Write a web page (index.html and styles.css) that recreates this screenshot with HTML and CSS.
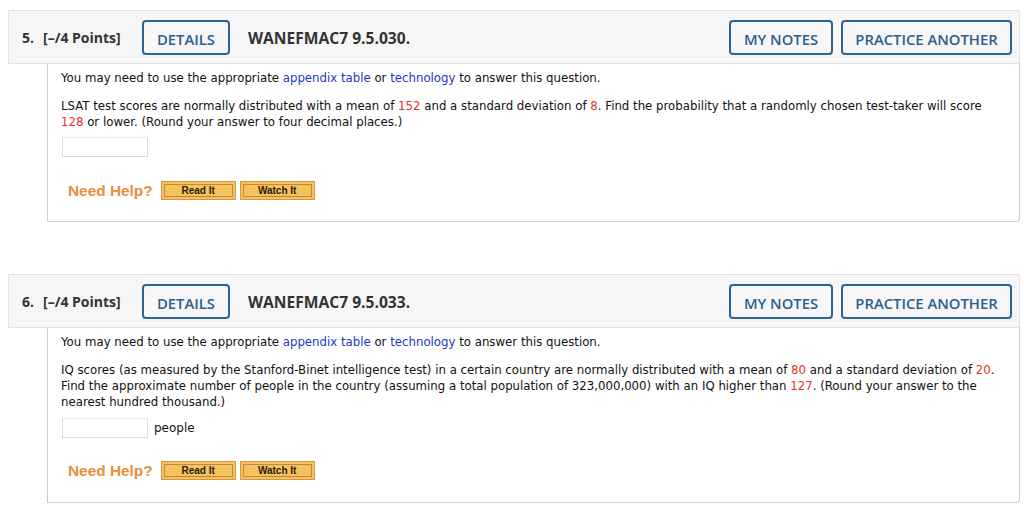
FILE: index.html
```html
<!DOCTYPE html>
<html>
<head>
<meta charset="utf-8">
<link rel="stylesheet" href="styles.css">
</head>
<body>
<div class="page">
  <section class="question">
    <div class="qhead">
      <div class="qnum">5.</div>
      <div class="qpts">[–/4 Points]</div>
      <button class="obtn details">DETAILS</button>
      <div class="qcode">WANEFMAC7 9.5.030.</div>
      <div class="spacer"></div>
      <button class="obtn notes">MY NOTES</button>
      <button class="obtn practice">PRACTICE ANOTHER</button>
    </div>
    <div class="qbody">
      <p class="intro">You may need to use the appropriate <a class="lnk">appendix table</a> or <a class="lnk">technology</a> to answer this question.</p>
      <p class="prob">LSAT test scores are normally distributed with a mean of <span class="num">152</span> and a standard deviation of <span class="num">8</span>. Find the probability that a randomly chosen test-taker will score <span class="num">128</span> or lower. (Round your answer to four decimal places.)</p>
      <div class="answer"><span class="inbox"></span></div>
      <div class="help">
        <span class="needhelp">Need Help?</span>
        <span class="hbtn">Read It</span>
        <span class="hbtn">Watch It</span>
      </div>
    </div>
  </section>

  <section class="question second">
    <div class="qhead">
      <div class="qnum">6.</div>
      <div class="qpts">[–/4 Points]</div>
      <button class="obtn details">DETAILS</button>
      <div class="qcode">WANEFMAC7 9.5.033.</div>
      <div class="spacer"></div>
      <button class="obtn notes">MY NOTES</button>
      <button class="obtn practice">PRACTICE ANOTHER</button>
    </div>
    <div class="qbody b2">
      <p class="intro">You may need to use the appropriate <a class="lnk">appendix table</a> or <a class="lnk">technology</a> to answer this question.</p>
      <p class="prob">IQ scores (as measured by the Stanford-Binet intelligence test) in a certain country are normally distributed with a mean of <span class="num">80</span> and a standard deviation of <span class="num">20</span>. Find the approximate number of people in the country (assuming a total population of 323,000,000) with an IQ higher than <span class="num">127</span>. (Round your answer to the nearest hundred thousand.)</p>
      <div class="answer a2"><span class="inbox"></span><span class="unit">people</span></div>
      <div class="help">
        <span class="needhelp">Need Help?</span>
        <span class="hbtn">Read It</span>
        <span class="hbtn">Watch It</span>
      </div>
    </div>
  </section>
</div>
</body>
</html>
```

FILE: styles.css
```css
html, body {
  margin: 0;
  padding: 0;
  background: #ffffff;
}
.page {
  padding: 10px 4px 0 8px;
}
.question.second {
  margin-top: 52px;
}
.qhead {
  display: flex;
  align-items: center;
  height: 54px;
  box-sizing: border-box;
  background: #f6f6f6;
  border: 1px solid #e2e2e2;
  padding: 0 7px 0 13px;
  font-family: "Open Sans", "DejaVu Sans", sans-serif;
  color: #333333;
}
.qnum {
  font-weight: 700;
  font-size: 14px;
  width: 21px;
}
.qpts {
  font-weight: 700;
  font-size: 14px;
  width: 99px;
}
.obtn {
  font-family: "Open Sans", "DejaVu Sans", sans-serif;
  font-size: 14.8px;
  font-weight: 600;
  color: #2b5f8e;
  background: #f6f6f6;
  border: 2px solid #2f6594;
  border-radius: 4px;
  height: 35px;
  box-sizing: border-box;
  padding: 3px 0 0 0;
  margin: 0;
  text-align: center;
}
.details {
  width: 88px;
}
.notes {
  width: 104px;
}
.practice {
  width: 171px;
  margin-left: 8px;
}
.qcode {
  font-weight: 700;
  font-size: 15.6px;
  margin-left: 18px;
  padding-top: 2px;
}
.spacer {
  flex: 1;
}
.qbody {
  margin-left: 39px;
  border: 1px solid #cccccc;
  border-top: none;
  border-bottom-right-radius: 4px;
  padding: 6px 14px 21px 13px;
  font-family: "DejaVu Sans", Verdana, sans-serif;
  font-size: 11.75px;
  line-height: 16px;
  color: #111111;
}
.qbody.b2 {
  padding-bottom: 22px;
}
.qbody p {
  margin: 0;
}
.prob {
  margin-top: 12px !important;
}
.lnk {
  color: #1f36c8;
}
.num {
  color: #e5322b;
}
.answer {
  display: flex;
  align-items: center;
  margin-top: 7px;
}
.answer.a2 {
  margin-top: 8px;
}
.inbox {
  display: block;
  width: 86px;
  height: 20px;
  box-sizing: border-box;
  border: 1px solid #dcdcdc;
  border-top-color: #ececec;
  margin-left: 1px;
}
.unit {
  margin-left: 6px;
  font-size: 12px;
}
.help {
  display: flex;
  align-items: center;
  margin-top: 24px;
  padding-left: 7px;
}
.b2 .help {
  margin-top: 23px;
}
.needhelp {
  font-family: "Liberation Sans", Arial, sans-serif;
  font-weight: 700;
  font-size: 15.4px;
  color: #ea8d3c;
  margin-right: 8px;
}
.hbtn {
  display: flex;
  align-items: center;
  justify-content: center;
  width: 75px;
  height: 19px;
  box-sizing: border-box;
  border: 1px solid #de9248;
  background: #f6c25c;
  box-shadow: inset 0 0 0 2px #f6c25c, inset 0 0 0 3px #b98a45;
  font-family: "Liberation Sans", Arial, sans-serif;
  font-weight: 700;
  font-size: 10px;
  color: #2a1a08;
  margin-right: 4px;
}
```
